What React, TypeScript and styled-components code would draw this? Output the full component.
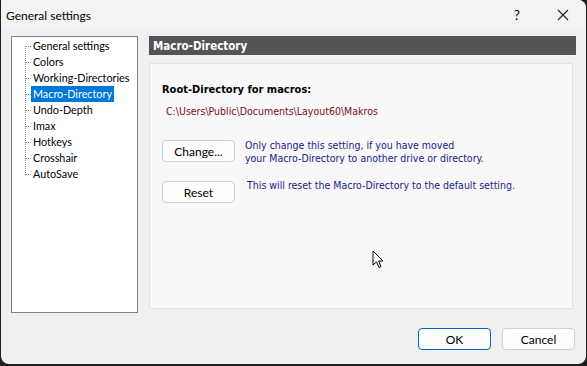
import React from "react";
import styled, { createGlobalStyle } from "styled-components";

const Global = createGlobalStyle`
  html, body { margin: 0; padding: 0; background: #1f1f1f; }
  body { width: 587px; height: 366px; overflow: hidden; }
`;

const Win = styled.div`
  position: relative;
  width: 585px;
  height: 364px;
  margin-left: 1px;
  background: #f0f0f0;
  border-radius: 0 8px 8px 8px;
  display: flex;
  flex-direction: column;
  font-family: "Lato", "Noto Sans", sans-serif;
  color: #000;
  overflow: hidden;
`;

const TitleBar = styled.div`
  height: 30px;
  display: flex;
  align-items: center;
  padding-left: 5px;
  font-size: 12px;
  background: #f3f3f3;
`;

const Title = styled.div`
  flex: 1;
`;

const TitleBtn = styled.div<{ $w: number }>`
  width: ${(p) => p.$w}px;
  height: 30px;
  display: flex;
  align-items: center;
  justify-content: center;
  font-size: 13px;
`;

const Main = styled.div`
  display: flex;
  gap: 11px;
  padding: 6px 10px 0 10px;
`;

const Tree = styled.div`
  width: 125px;
  height: 274px;
  background: #fff;
  border: 1px solid #828282;
  position: relative;
  padding-top: 1px;
  box-sizing: content-box;
`;

const TreeList = styled.div`
  display: flex;
  flex-direction: column;
  padding-left: 13px;
  position: relative;
`;

const VLine = styled.div`
  position: absolute;
  left: 13px;
  top: 8px;
  height: 129px;
  border-left: 1px dotted #8a8a8a;
`;

const TreeRow = styled.div`
  height: 16px;
  display: flex;
  align-items: center;
`;

const HLine = styled.div`
  width: 6px;
  flex-shrink: 0;
  border-top: 1px dotted #8a8a8a;
`;

const TreeLabel = styled.span<{ $sel?: boolean }>`
  font-size: 10.8px;
  padding: 0 2px;
  line-height: 16px;
  height: 16px;
  white-space: nowrap;
  background: ${(p) => (p.$sel ? "#0078d7" : "transparent")};
  color: ${(p) => (p.$sel ? "#fff" : "#000")};
`;

const Right = styled.div`
  width: 427px;
  display: flex;
  flex-direction: column;
  gap: 8px;
`;

const Header = styled.div`
  height: 19px;
  background: #545454;
  color: #fff;
  font-family: "DejaVu Sans Condensed", "DejaVu Sans", sans-serif;
  font-weight: bold;
  font-size: 11.5px;
  display: flex;
  align-items: center;
  padding-left: 4px;
`;

const Panel = styled.div`
  width: 424px;
  height: 246px;
  background: #f8f8f8;
  border: 1px solid #e2e2e2;
  padding: 19px 0 0 12px;
  box-sizing: border-box;
  font-family: "DejaVu Sans Condensed", "DejaVu Sans", sans-serif;
  font-size: 10.5px;
  line-height: 13px;
`;

const Label = styled.div`
  font-weight: bold;
  font-size: 11px;
`;

const Path = styled.div`
  color: #7d0f16;
  margin: 9px 0 0 4px;
`;

const Row = styled.div<{ $mt: number }>`
  display: flex;
  align-items: flex-start;
  margin-top: ${(p) => p.$mt}px;
`;

const Btn = styled.button<{ $def?: boolean }>`
  width: 73px;
  height: 22px;
  box-sizing: border-box;
  flex-shrink: 0;
  background: #fdfdfd;
  border: 1px solid ${(p) => (p.$def ? "#0067c0" : "#d0d0d0")};
  border-radius: 4px;
  font-family: "Lato", "Noto Sans", sans-serif;
  font-size: 12px;
  color: #000;
  padding: 0;
`;

const Desc = styled.div<{ $ml: number; $mt: number }>`
  color: #1a1a8c;
  margin-left: ${(p) => p.$ml}px;
  margin-top: ${(p) => p.$mt}px;
`;

const Footer = styled.div`
  display: flex;
  justify-content: flex-end;
  gap: 11px;
  padding: 15px 11px 0 0;
`;

const Cursor = styled.svg`
  position: absolute;
  left: 371px;
  top: 250px;
`;

const items = [
  "General settings",
  "Colors",
  "Working-Directories",
  "Macro-Directory",
  "Undo-Depth",
  "Imax",
  "Hotkeys",
  "Crosshair",
  "AutoSave",
];

export default function App() {
  return (
    <>
      <Global />
      <Win>
        <TitleBar>
          <Title>General settings</Title>
          <TitleBtn $w={46}>?</TitleBtn>
          <TitleBtn $w={46}>
            <svg width="12" height="12" viewBox="0 0 12 12">
              <path d="M1 1L11 11M11 1L1 11" stroke="#222" strokeWidth="1.1" />
            </svg>
          </TitleBtn>
        </TitleBar>
        <Main>
          <Tree>
            <TreeList>
              <VLine />
              {items.map((it) => (
                <TreeRow key={it}>
                  <HLine />
                  <TreeLabel $sel={it === "Macro-Directory"}>{it}</TreeLabel>
                </TreeRow>
              ))}
            </TreeList>
          </Tree>
          <Right>
            <Header>Macro-Directory</Header>
            <Panel>
              <Label>Root-Directory for macros:</Label>
              <Path>C:\Users\Public\Documents\Layout60\Makros</Path>
              <Row $mt={22}>
                <Btn>Change...</Btn>
                <Desc $ml={10} $mt={-1}>
                  Only change this setting, if you have moved
                  <br />
                  your Macro-Directory to another drive or directory.
                </Desc>
              </Row>
              <Row $mt={16}>
                <Btn>Reset</Btn>
                <Desc $ml={12} $mt={-2}>This will reset the Macro-Directory to the default setting.</Desc>
              </Row>
            </Panel>
          </Right>
        </Main>
        <Footer>
          <Btn $def>OK</Btn>
          <Btn>Cancel</Btn>
        </Footer>
        <Cursor width="14" height="20" viewBox="0 0 14 20">
          <path
            d="M1 1 L1 15 L4.5 11.8 L7 17.5 L9 16.6 L6.6 11 L11 11 Z"
            fill="#fff"
            stroke="#000"
            strokeWidth="1"
            strokeLinejoin="round"
          />
        </Cursor>
      </Win>
    </>
  );
}
